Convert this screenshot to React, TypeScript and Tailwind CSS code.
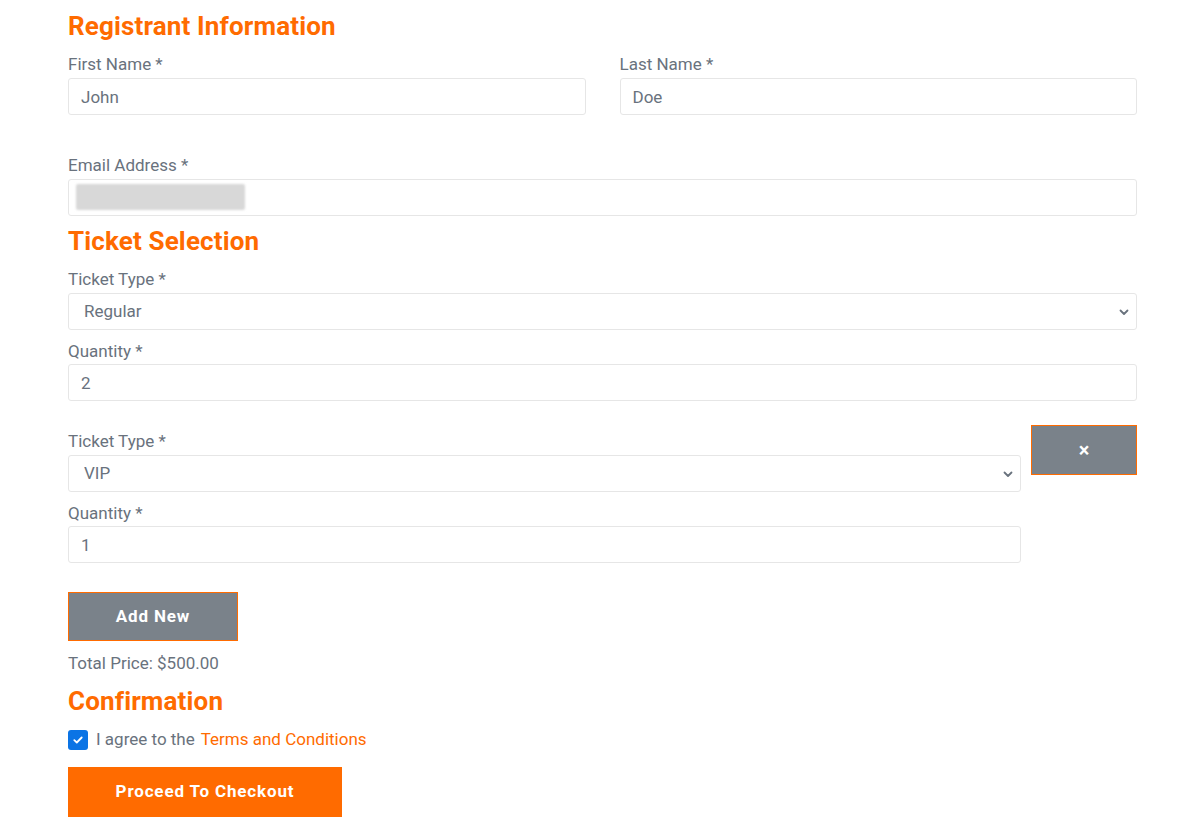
import React, { useState } from "react";

type TicketRow = {
  tipo: string;
  quantidade: string;
};

const font = { fontFamily: "Roboto, 'Liberation Sans', sans-serif" };

const Chevron = () => (
  <svg
    className="pointer-events-none absolute right-[7px] top-1/2 -translate-y-1/2"
    width="12"
    height="12"
    viewBox="0 0 12 12"
    fill="none"
  >
    <path d="M2.5 4.5 6 8l3.5-3.5" stroke="#69727d" strokeWidth="1.8" strokeLinecap="round" strokeLinejoin="round" />
  </svg>
);

const App: React.FC = () => {
  const [tickets, setTickets] = useState<TicketRow[]>([
    { tipo: "Regular", quantidade: "2" },
    { tipo: "VIP", quantidade: "1" },
  ]);
  const [aceito, setAceito] = useState(true);

  const label = "block text-[17px] leading-[24px] text-[#69727d]";
  const input =
    "block w-full h-[37px] rounded-[3px] border border-[#e6e6e6] bg-white px-[12px] text-[17px] text-[#69727d] outline-none";
  const titulo = "text-[26px] font-bold leading-[34px] tracking-[0.15px] text-[#ff6b00]";

  return (
    <div className="min-h-screen bg-white" style={font}>
      <div className="ml-[68px] w-[1069px] pt-[9px]">
        <h2 className={titulo}>Registrant Information</h2>

        <div className="mt-[9px] grid grid-cols-2 gap-[34px]">
          <div>
            <label className={label}>First Name *</label>
            <input className={`${input} mt-[2px]`} defaultValue="John" />
          </div>
          <div>
            <label className={label}>Last Name *</label>
            <input className={`${input} mt-[2px]`} defaultValue="Doe" />
          </div>
        </div>

        <div className="mt-[38px]">
          <label className={label}>Email Address *</label>
          <div className="relative mt-[2px]">
            <input className={input} defaultValue="" />
            <div className="absolute left-[8px] top-[5px] h-[26px] w-[169px] rounded-[2px] bg-[#d8d8d8] blur-[1px]" />
          </div>
        </div>

        <h2 className={`mt-[8px] ${titulo}`}>Ticket Selection</h2>

        {tickets.map((t, i) => (
          <div key={i} className={`flex gap-[10px] ${i === 0 ? "mt-[9px]" : "mt-[28px]"}`}>
            <div className="flex-1">
              <label className={label}>Ticket Type *</label>
              <div className="relative mt-[2px]">
                <select
                  className={`${input} appearance-none pl-[15px]`}
                  value={t.tipo}
                  onChange={(e) => {
                    const novos = [...tickets];
                    novos[i] = { ...t, tipo: e.target.value };
                    setTickets(novos);
                  }}
                >
                  <option>Regular</option>
                  <option>VIP</option>
                </select>
                <Chevron />
              </div>
              <label className={`${label} mt-[9px]`}>Quantity *</label>
              <input className={`${input} mt-[1px]`} defaultValue={t.quantidade} />
            </div>
            {i > 0 && (
              <div className="w-[106px]">
                <button
                  type="button"
                  onClick={() => setTickets(tickets.filter((_, j) => j !== i))}
                  className="-mt-[4px] flex h-[50px] w-[106px] items-center justify-center border border-[#ff6b00] bg-[#7a828a] text-[20px] font-bold leading-none text-white"
                >
                  ×
                </button>
              </div>
            )}
          </div>
        ))}

        <button
          type="button"
          onClick={() => setTickets([...tickets, { tipo: "Regular", quantidade: "1" }])}
          className="mt-[29px] h-[49px] w-[170px] border border-[#ff6b00] bg-[#7a828a] text-[17px] font-bold tracking-[0.85px] text-white"
        >
          Add New
        </button>

        <p className="mt-[10px] text-[17px] leading-[24px] text-[#69727d]">Total Price: $500.00</p>

        <h2 className={`mt-[9px] ${titulo}`}>Confirmation</h2>

        <label className="mt-[10px] flex h-[24px] items-center text-[17px] text-[#69727d]">
          <span
            onClick={() => setAceito(!aceito)}
            className={`flex h-[20px] w-[20px] items-center justify-center rounded-[3px] ${aceito ? "bg-[#0b74e5]" : "border border-[#999]"}`}
          >
            {aceito && (
              <svg width="10" height="8" viewBox="0 0 10 8" fill="none">
                <path d="M1.3 4.2 3.8 6.5 8.7 1.5" stroke="white" strokeWidth="1.8" strokeLinecap="round" strokeLinejoin="round" />
              </svg>
            )}
          </span>
          <span className="ml-[8px]">I agree to the</span>
          <a className="ml-[6px] text-[#ff6b00]">Terms and Conditions</a>
        </label>

        <button
          type="button"
          className="mt-[15px] h-[50px] w-[274px] bg-[#ff6b00] text-[17px] font-bold tracking-[0.85px] text-white"
        >
          Proceed To Checkout
        </button>
      </div>
    </div>
  );
};

export default App;
